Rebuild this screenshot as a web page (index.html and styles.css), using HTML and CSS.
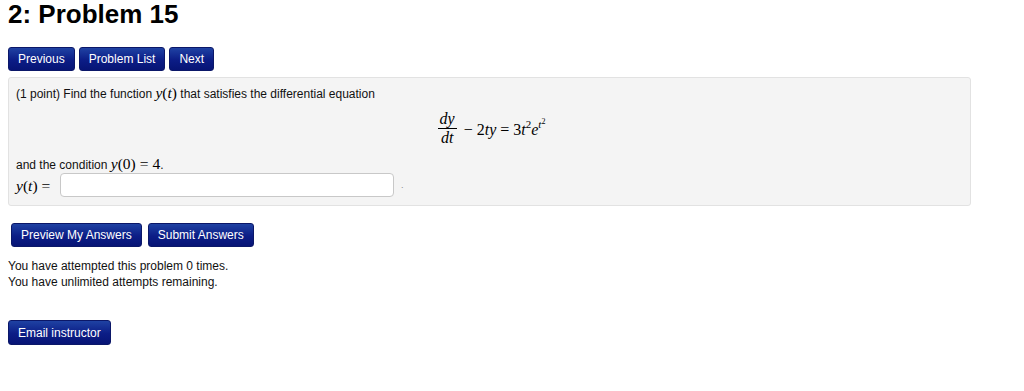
FILE: index.html
```html
<!DOCTYPE html>
<html>
<head>
<meta charset="utf-8">
<link rel="stylesheet" href="styles.css">
</head>
<body>
<h1 class="title">2: Problem 15</h1>
<div class="nav">
  <a class="btn">Previous</a>
  <a class="btn">Problem List</a>
  <a class="btn">Next</a>
</div>
<div class="problem">
  <div class="line">(1 point) Find the function <span class="m"><i>y</i>(<i>t</i>)</span> that satisfies the differential equation</div>
  <div class="display">
    <span class="frac"><span class="num"><i>dy</i></span><span class="den"><i>dt</i></span></span>
    <span class="eq"><span class="op">&minus;</span>2<i>ty</i><span class="op">=</span>3<i>t</i><sup>2</sup><i>e</i><sup class="sup2"><i>t</i><sup>2</sup></sup></span>
  </div>
  <div class="line">and the condition <span class="m"><i>y</i>(0)<span class="op">=</span>4</span>.</div>
  <div class="answer">
    <span class="m label"><i>y</i>(<i>t</i>)<span class="op">=</span></span>
    <span class="field"></span>
    <span class="dot">.</span>
  </div>
</div>
<div class="actions">
  <a class="btn">Preview My Answers</a>
  <a class="btn">Submit Answers</a>
</div>
<div class="attempts">
  <div>You have attempted this problem 0 times.</div>
  <div>You have unlimited attempts remaining.</div>
</div>
<div class="email">
  <a class="btn btn-tall">Email instructor</a>
</div>
</body>
</html>
```
FILE: styles.css
```css
html, body {
  margin: 0;
  background: #fff;
}
body {
  padding: 0 8px;
  font-family: "Liberation Sans", Arial, sans-serif;
  font-size: 12px;
  color: #111;
}
.title {
  margin: 0;
  font-size: 26px;
  line-height: 28px;
  font-weight: bold;
  color: #000;
}
.nav {
  display: flex;
  gap: 4px;
  margin-top: 19px;
}
.btn {
  display: inline-flex;
  align-items: center;
  height: 24px;
  box-sizing: border-box;
  padding: 0 9px;
  border: 1px solid #0b1768;
  border-radius: 3px;
  background: linear-gradient(to bottom, #1f42a3 0%, #0c1d86 55%, #071475 100%);
  color: #fff;
  font-size: 12px;
  white-space: nowrap;
  text-decoration: none;
}
.btn-tall {
  height: 25px;
}
.problem {
  margin-top: 6px;
  width: 963px;
  height: 129px;
  box-sizing: border-box;
  border: 1px solid #e2e2e2;
  border-radius: 3px;
  background: #f4f4f4;
  padding: 8px 7px;
}
.line {
  line-height: 14px;
  height: 14px;
  white-space: nowrap;
}
.m {
  font-family: "Liberation Serif", "Times New Roman", serif;
  font-size: 15.5px;
  line-height: 14px;
  color: #000;
}
.m i, .display i {
  font-style: italic;
}
.op {
  margin: 0 4px;
}
.display {
  display: flex;
  justify-content: center;
  align-items: center;
  height: 32px;
  padding: 12px 0 13px;
  font-family: "Liberation Serif", "Times New Roman", serif;
  font-size: 16px;
  color: #000;
}
.frac {
  display: inline-flex;
  flex-direction: column;
  align-items: center;
  margin-right: 3px;
  margin-left: 4px;
}
.num, .den {
  line-height: 13px;
  padding: 0 2px;
}
.num {
  padding-bottom: 3px;
  border-bottom: 1px solid #000;
}
.den {
  padding-top: 2px;
}
.eq {
  line-height: 16px;
  padding-top: 3px;
}
sup {
  font-size: 11px;
  line-height: 0;
  vertical-align: 7px;
}
.sup2 sup {
  font-size: 8px;
  vertical-align: 4px;
}
.answer {
  display: flex;
  align-items: center;
  height: 24px;
  margin-top: 2px;
}
.label {
  width: 44px;
  flex: none;
  padding-top: 2px;
}
.label .op {
  margin-right: 0;
}
.field {
  width: 334px;
  height: 24px;
  box-sizing: border-box;
  border: 1px solid #c8c8c8;
  border-radius: 4px;
  background: #fff;
}
.dot {
  margin-left: 7px;
  color: #888;
  font-size: 9px;
}
.actions {
  display: flex;
  gap: 6px;
  margin-top: 17px;
  margin-left: 3px;
}
.attempts {
  margin-top: 11px;
  line-height: 16px;
}
.email {
  margin-top: 30px;
  display: flex;
}
```
